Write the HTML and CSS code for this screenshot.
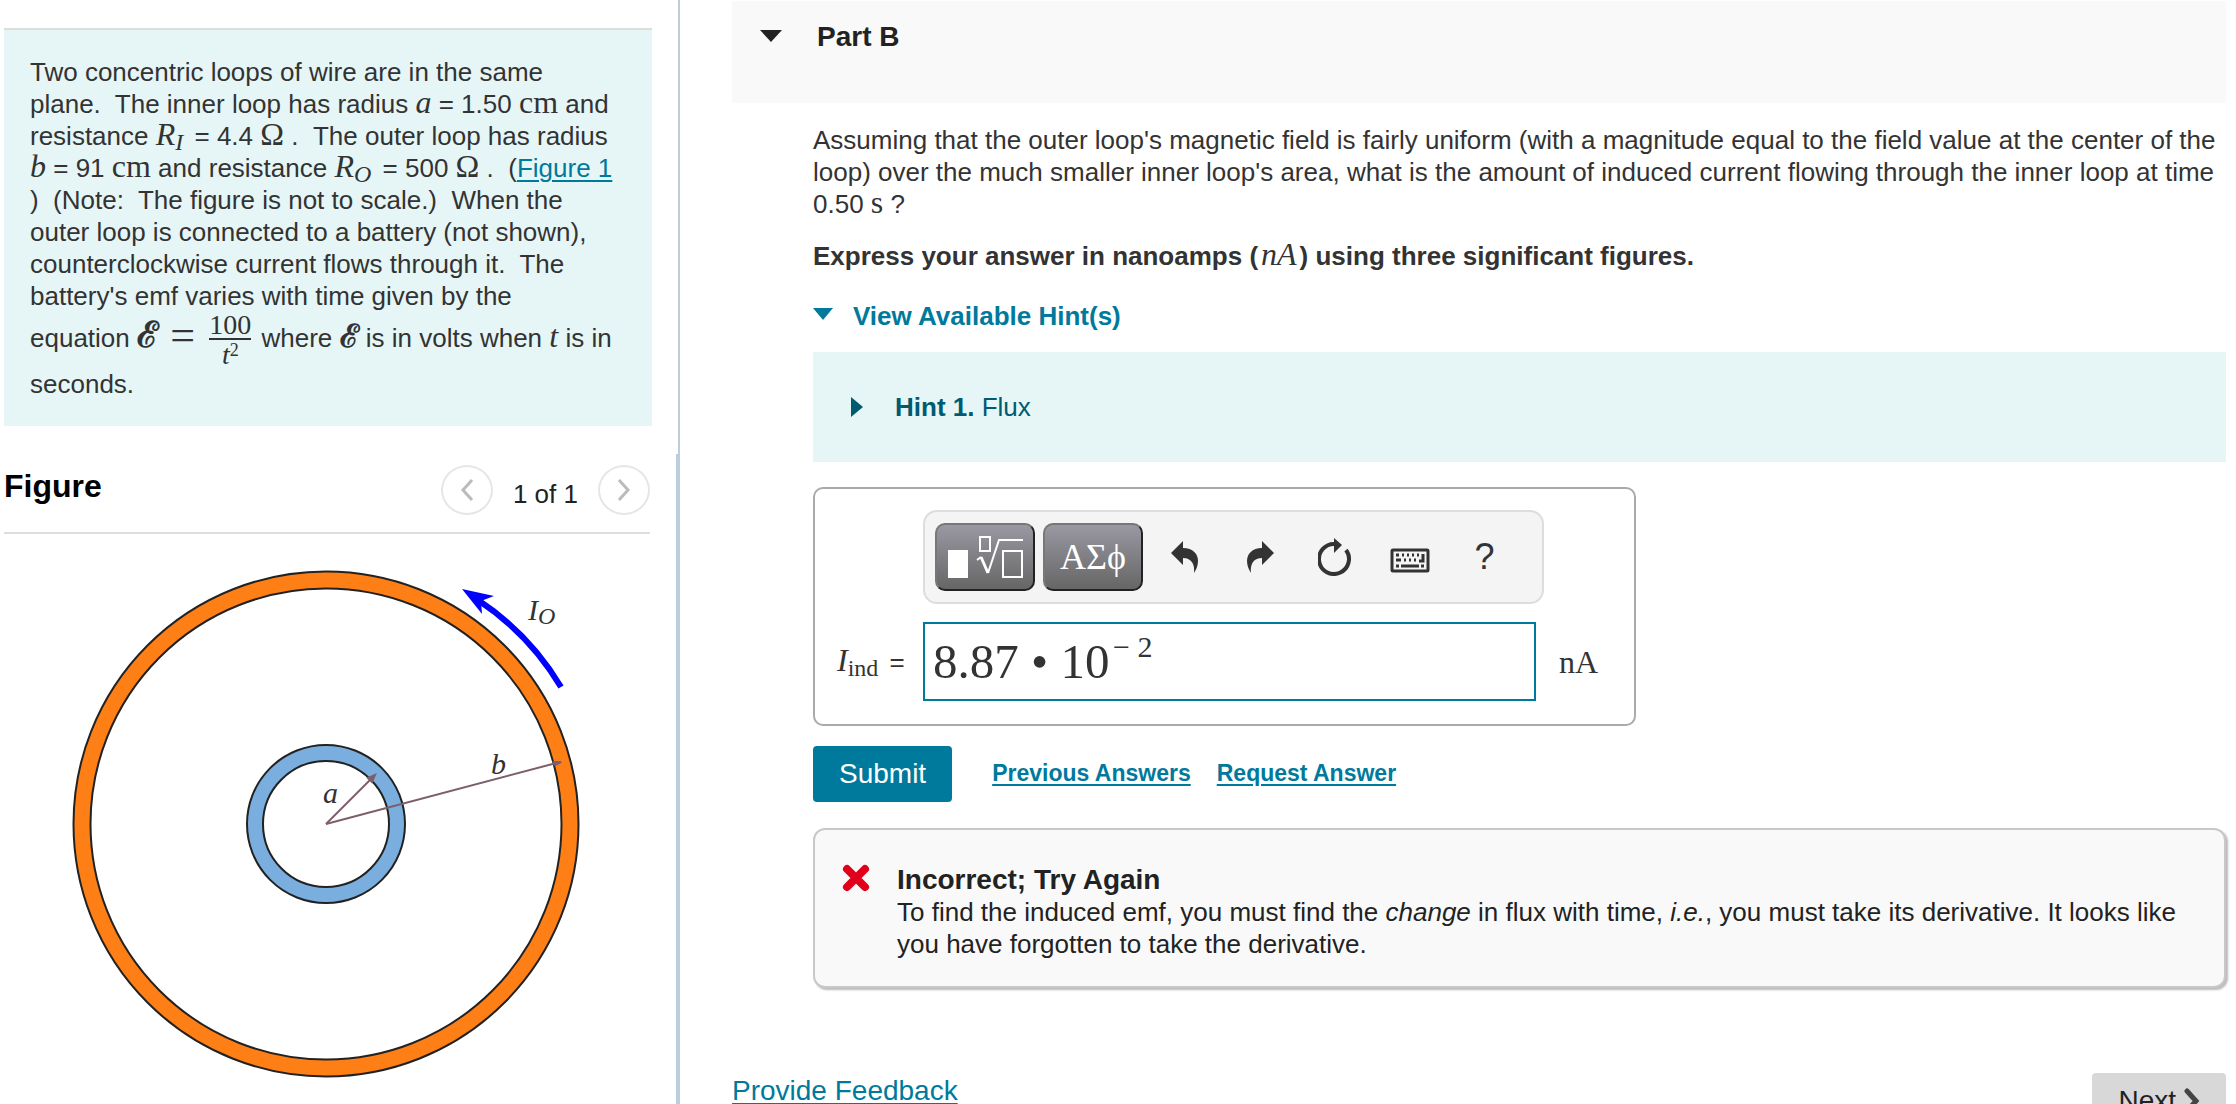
FILE: index.html
```html
<!doctype html>
<html lang="en">
<head>
    <meta charset="UTF-8">
    <title>Induction in Concentric Loops</title>
    <link rel="stylesheet" href="styles.css">
</head>
<body>
<div class="page">
    <aside class="sidebar">
        <div class="problem-pane">
            <section class="problem">
                Two concentric loops of wire are in the same plane.&nbsp; The inner loop has radius <i class="math">a</i> = 1.50 <span class="math">cm</span> and resistance <i class="math">R<sub>I</sub></i> = 4.4 <span class="math">Ω</span> .&nbsp; The outer loop has radius <span class="nowrap"><i class="math">b</i> = 91</span> <span class="math">cm</span> and resistance <i class="math">R<sub>O</sub></i> = 500 <span class="math">Ω</span> .&nbsp; (<a href="#figure">Figure 1</a><br>)&nbsp; (Note:&nbsp; The figure is not to scale.)&nbsp; When the outer loop is connected to a battery (not shown), counterclockwise current flows through it.&nbsp; The battery's emf varies with time given by the <span class="nowrap">equation <span class="math emf">ℰ</span> <span class="math equals">=</span> <span class="fraction"><span>100</span><span class="denominator"><i>t</i><sup>2</sup></span></span></span> where <span class="math script">ℰ</span> is in volts when <i class="math">t</i> is in seconds.
            </section>
        </div>
        <section class="figure" id="figure">
            <header class="figure-header">
                <h2>Figure</h2>
                <nav class="pager">
                    <button class="round" aria-label="Previous figure">
                        <svg width="14" height="24" viewBox="0 0 14 24"><path d="M12 2 3 12l9 10"/></svg>
                    </button>
                    <span class="page-count">1 of 1</span>
                    <button class="round" aria-label="Next figure">
                        <svg width="14" height="24" viewBox="0 0 14 24"><path d="m2 2 9 10-9 10"/></svg>
                    </button>
                </nav>
            </header>
            <svg class="diagram" viewBox="0 0 646 560" role="img" aria-label="Two concentric loops">
                <circle cx="322" cy="290" r="244" fill="none" stroke="#222" stroke-width="19"/>
                <circle cx="322" cy="290" r="244" fill="none" stroke="#ff7f17" stroke-width="15"/>
                <circle cx="322" cy="290" r="71" fill="none" stroke="#222" stroke-width="18"/>
                <circle cx="322" cy="290" r="71" fill="none" stroke="#7aaede" stroke-width="14"/>
                <g stroke="#7d5f6b" stroke-width="2" fill="#7d5f6b">
                    <path d="M322 290 370 242"/>
                    <path d="M322 290 556 228"/>
                    <path d="m371 241-7 3 4 4zM557 228h-7l1 3z"/>
                </g>
                <path d="M557 153A271 271 0 0 0 474 66" fill="none" stroke="#00f" stroke-width="6"/>
                <path d="m458 55 32 7-13 5 1 13z" fill="#00f"/>
                <text x="319" y="269">a</text>
                <text x="487" y="240">b</text>
                <text x="524" y="86">I<tspan class="diagram-sub" dy="4">O</tspan></text>
            </svg>
        </section>
    </aside>

    <main class="content">
        <header class="part-header">
            <svg width="22" height="12" viewBox="0 0 22 12"><path d="M0 0h22L11 12z" fill="#222"/></svg>
            <h1>Part B</h1>
        </header>
        <div class="part-body">
            <p>Assuming that the outer loop's magnetic field is fairly uniform (with a magnitude equal to the field value at the center of the loop) over the much smaller inner loop's area, what is the amount of induced current flowing through the inner loop at time 0.50 <span class="math">s</span> ?</p>
            <p class="instructions">Express your answer in nanoamps (<i class="math">nA</i>) using three significant figures.</p>
            <button class="hints-toggle">
                <svg width="20" height="12" viewBox="0 0 20 12"><path d="M0 0h20L10 12z" fill="#007a9c"/></svg>
                View Available Hint(s)
            </button>
            <button class="hint">
                <svg width="12" height="20" viewBox="0 0 12 20"><path d="M0 0v20l12-10z" fill="#005a70"/></svg>
                <span><b>Hint 1.</b> Flux</span>
            </button>

            <form class="answer">
                <div class="toolbar">
                    <button type="button" class="dark" aria-label="Templates">
                        <svg width="76" height="48" viewBox="0 0 76 48" fill="none" stroke="#fff" stroke-width="2">
                            <path d="M1 17h20v28H1z" fill="#fff" stroke="none"/>
                            <path d="M33 4h10v14H33zM56 18h19v26H56z"/>
                            <path d="m30 27 4-3" />
                            <path d="m34 24 7 16" stroke-width="3"/>
                            <path d="M41 40 52 7h24"/>
                        </svg>
                    </button>
                    <button type="button" class="dark">ΑΣϕ</button>
                    <button type="button" class="tool" aria-label="Undo">
                        <svg width="28" height="32" viewBox="0 0 28 32"><path d="M0 12 12 0v7c10 0 15 6 15 13 0 5-2 9-4 12 1-8-2-15-11-15v7z"/></svg>
                    </button>
                    <button type="button" class="tool" aria-label="Redo">
                        <svg width="28" height="32" viewBox="0 0 28 32"><path d="M28 12 16 0v7C6 7 1 13 1 20c0 5 2 9 4 12-1-8 2-15 11-15v7z"/></svg>
                    </button>
                    <button type="button" class="tool" aria-label="Reset">
                        <svg width="34" height="38" viewBox="0 0 34 38"><path d="M17 6A15 15 0 1 0 28 12" fill="none" stroke="#333" stroke-width="4"/><path d="m16 0 8 7-8 8z"/></svg>
                    </button>
                    <button type="button" class="tool keyboard" aria-label="Keyboard shortcuts">
                        <svg width="40" height="26" viewBox="0 0 40 26" fill="none" stroke="#333">
                            <rect x="2" y="3" width="36" height="21" rx="1"/>
                            <path d="M6 8h3m3 0h2m3 0h2m3 0h2m3 0h2M6 13h5m3 0h2m3 0h2m3 0h2M33 7v7h-4M6 19h3m2 0h18m2 0h3"/>
                        </svg>
                    </button>
                    <button type="button" class="tool" aria-label="Help">?</button>
                </div>
                <label for="answer"><i class="math">I<sub>ind</sub></i> =</label>
                <div class="math-field">
                    <input id="answer" class="base" type="text" value="8.87 • 10">
                    <input class="exponent" type="text" value="− 2" aria-label="Exponent">
                </div>
                <span class="math unit">nA</span>
            </form>

            <div class="actions">
                <button class="submit">Submit</button>
                <a href="#previous">Previous Answers</a>
                <a href="#request">Request Answer</a>
            </div>

            <section class="feedback">
                <svg width="28" height="28" viewBox="0 0 28 28"><path d="m5 5 18 18M23 5 5 23" stroke="#e0001b" stroke-width="8" stroke-linecap="round"/></svg>
                <div>
                    <h3>Incorrect; Try Again</h3>
                    <p>To find the induced emf, you must find the <em>change</em> in flux with time, <em>i.e.</em>, you must take its derivative. It looks like you have forgotten to take the derivative.</p>
                </div>
            </section>
        </div>
        <footer class="footer">
            <a href="#feedback">Provide Feedback</a>
            <button class="next">
                Next
                <svg width="16" height="26" viewBox="0 0 16 26"><path d="m3 3 9 10-9 10"/></svg>
            </button>
        </footer>
    </main>
</div>
</body>
</html>
```
FILE: styles.css
```css
* {
    box-sizing: border-box;
}

body {
    margin: 0;
    color: #333;
    font: 26px/32px "Liberation Sans", Arial, sans-serif;
}

h1, h2, h3, p {
    margin: 0;
}

h1, h3 {
    color: #222;
    font-size: 28px;
    line-height: 32px;
}

button {
    padding: 0;
    border: 0;
    background: none;
    color: inherit;
    font: inherit;
    cursor: pointer;
}

a {
    color: #007a9c;
    text-decoration-thickness: 2px;
    text-underline-offset: 3px;
}

.page {
    display: flex;
    height: 100vh;
}

.nowrap {
    white-space: nowrap;
}

/* math */

.math {
    font-family: "Liberation Serif", "Times New Roman", serif;
    font-size: 32px;
    font-weight: normal;
    line-height: 0;
}

.math sub {
    margin-right: 4px;
    font-size: 24px;
    line-height: 0;
    vertical-align: -5px;
}

.script {
    font-weight: bold;
}

.emf {
    font-size: 36px;
    font-weight: bold;
}

.equals {
    margin: 0 4px;
    font-size: 44px;
    vertical-align: -3px;
}

.fraction {
    display: inline-flex;
    flex-direction: column;
    margin: 0 3px;
    font-family: "Liberation Serif", "Times New Roman", serif;
    font-size: 28px;
    line-height: 26px;
    text-align: center;
    vertical-align: middle;
}

.denominator {
    padding: 2px 8px 0;
    border-top: 2px solid #333;
}

.denominator sup {
    font-size: 18px;
    line-height: 0;
    vertical-align: 8px;
}

/* left column */

.sidebar {
    display: flex;
    flex-direction: column;
    flex: 0 0 680px;
    overflow-y: auto;
    scrollbar-width: none;
}

.problem-pane {
    padding: 28px 26px 28px 4px;
    border-right: 2px solid #bccddd;
}

.problem {
    padding: 26px;
    border-top: 2px solid #ddd;
    background: #e6f6f7;
}

.figure {
    flex: 1;
    padding: 0 26px 0 4px;
    border-right: 4px solid #bccddd;
}

.figure-header {
    display: flex;
    align-items: center;
    justify-content: space-between;
    height: 80px;
    border-bottom: 2px solid #ddd;
}

.figure-header h2 {
    padding-bottom: 14px;
    color: #000;
    font-size: 32px;
}

.pager {
    display: flex;
    align-items: center;
    gap: 20px;
    padding-bottom: 6px;
    color: #222;
}

.page-count {
    padding-top: 8px;
}

.round {
    display: flex;
    align-items: center;
    justify-content: center;
    width: 52px;
    height: 50px;
    border: 2px solid #e6e6e6;
    border-radius: 50%;
}

.round svg {
    fill: none;
    stroke: #bbb;
    stroke-width: 3;
}

.diagram {
    display: block;
    width: 100%;
    fill: #333;
    font-family: "Liberation Serif", "Times New Roman", serif;
    font-size: 30px;
    font-style: italic;
}

.diagram-sub {
    font-size: 24px;
}

/* right column */

.content {
    flex: 1;
    padding: 0 10px 0 52px;
    overflow-y: auto;
    scrollbar-width: none;
}

.part-header {
    display: flex;
    align-items: flex-start;
    gap: 35px;
    margin-top: 1px;
    padding: 20px 28px 50px;
    background: #f9f9f9;
}

.part-header svg {
    margin-top: 9px;
}

.part-body {
    padding: 21px 0 0 81px;
}

.instructions {
    margin-top: 20px;
    font-weight: bold;
}

.instructions .math {
    margin: 0 3px;
}

.hints-toggle {
    display: flex;
    align-items: center;
    gap: 20px;
    margin-top: 28px;
    color: #007a9c;
    font-weight: bold;
}

.hints-toggle svg {
    margin-bottom: 4px;
}

.hint {
    display: flex;
    align-items: center;
    gap: 32px;
    width: 100%;
    margin-top: 20px;
    padding: 39px 38px;
    background: #e6f6f7;
    color: #005a70;
}

.answer {
    display: grid;
    grid-template-columns: 86px 613px auto;
    align-items: center;
    row-gap: 18px;
    width: fit-content;
    margin-top: 25px;
    padding: 21px 36px 23px 22px;
    border: 2px solid #aaa;
    border-radius: 10px;
}

.toolbar {
    display: flex;
    grid-column: 2 / -1;
    align-items: center;
    gap: 8px;
    width: 621px;
    padding: 11px 10px;
    border: 2px solid #ddd;
    border-radius: 14px;
    background: #f4f4f4;
}

.dark {
    display: flex;
    align-items: center;
    justify-content: center;
    width: 100px;
    height: 68px;
    border: 2px solid #222;
    border-top-color: #777;
    border-left-color: #777;
    border-radius: 10px;
    background: linear-gradient(#9a98a2, #666);
    color: #fff;
    font-family: "Liberation Serif", "Times New Roman", serif;
    font-size: 36px;
}

.tool {
    width: 67px;
    font-size: 36px;
}

.tool svg {
    display: block;
    margin: auto;
    fill: #333;
}

.tool.keyboard svg {
    box-sizing: content-box;
    padding-top: 6px;
    fill: none;
    stroke-width: 3;
}

.math-field {
    display: flex;
    align-items: center;
    height: 79px;
    padding-left: 8px;
    border: 2px solid #007a9c;
}

.math-field input {
    border: 0;
    outline: none;
    background: none;
    color: #333;
    font-family: "Liberation Serif", "Times New Roman", serif;
}

.math-field .base {
    width: 180px;
    padding: 0;
    font-size: 49px;
}

.math-field .exponent {
    flex: 1;
    min-width: 0;
    padding: 0 0 30px;
    font-size: 30px;
}

.answer label sub {
    font-style: normal;
}

.unit {
    padding-left: 23px;
}

.actions {
    display: flex;
    align-items: center;
    gap: 26px;
    margin-top: 20px;
    font-size: 23px;
    font-weight: bold;
}

.actions a {
    padding-bottom: 3px;
}

.submit {
    margin-right: 14px;
    padding: 12px 26px;
    border-radius: 4px;
    background: #007a9c;
    color: #fff;
    font-size: 28px;
    font-weight: normal;
}

.feedback {
    display: flex;
    gap: 27px;
    margin-top: 26px;
    padding: 34px 28px 26px 27px;
    border: 2px solid #c8c8c8;
    border-radius: 12px;
    background: #f9f9f9;
    box-shadow: 2px 2px 2px #bbb;
    color: #222;
}

.feedback svg {
    flex-shrink: 0;
}

.footer {
    display: flex;
    align-items: flex-start;
    justify-content: space-between;
    margin-top: 85px;
    font-size: 28px;
}

.footer a {
    padding-top: 2px;
}

.next {
    display: flex;
    align-items: center;
    gap: 8px;
    padding: 12px 26px;
    border-radius: 4px;
    background: #d8d8d8;
    color: #222;
}

.next svg {
    fill: none;
    stroke: #444;
    stroke-width: 5;
    stroke-linecap: round;
}
```
